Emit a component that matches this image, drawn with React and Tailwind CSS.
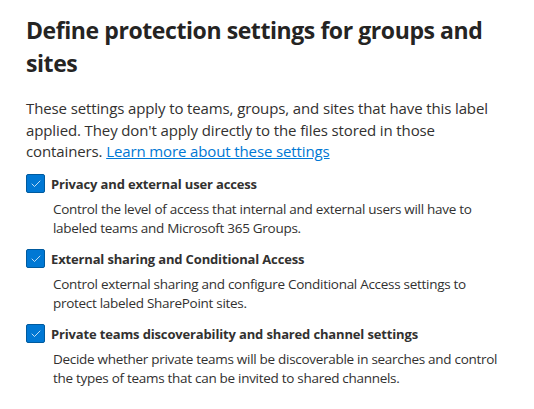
import { Check } from "lucide-react"

const items = [
	{
		title: "Privacy and external user access",
		desc: "Control the level of access that internal and external users will have to labeled teams and Microsoft 365 Groups.",
	},
	{
		title: "External sharing and Conditional Access",
		desc: "Control external sharing and configure Conditional Access settings to protect labeled SharePoint sites.",
	},
	{
		title: "Private teams discoverability and shared channel settings",
		desc: "Decide whether private teams will be discoverable in searches and control the types of teams that can be invited to shared channels.",
	},
]

const App = () => {
	return (
		<div
			className="w-[534px] h-[409px] bg-white text-[#323130] pl-[26px] pr-[30px] pt-[14px]"
			style={{ fontFamily: '"Segoe UI", "Open Sans", sans-serif' }}
		>
			<h1 className="text-[23px] leading-[33px] font-bold tracking-[-0.42px] text-[#252423]">
				Define protection settings for groups and sites
			</h1>

			<p className="mt-[18px] text-[15px] leading-[21.5px] tracking-[-0.12px]">
				These settings apply to teams, groups, and sites that have this label
				applied. They don't apply directly to the files stored in those
				containers.{" "}
				<a href="#" className="text-[#0078d4] underline">
					Learn more about these settings
				</a>
			</p>

			{/* CHECKBOX LIST */}
			<div className="mt-[11px] flex flex-col gap-[11px]">
				{items.map(item => (
					<div key={item.title}>
						<div className="flex items-center gap-[6px] h-[20px]">
							<div className="w-[19px] h-[19px] rounded-[2px] bg-[#0078d4] border border-[#005a9e] flex items-center justify-center shrink-0">
								<Check size={12} strokeWidth={1.5} className="text-white" />
							</div>
							<span className="text-[13px] font-bold leading-[20px] tracking-[-0.15px]">
								{item.title}
							</span>
						</div>
						<p className="mt-[6px] pl-[27px] text-[13.5px] leading-[19px] tracking-[-0.29px]">
							{item.desc}
						</p>
					</div>
				))}
			</div>
		</div>
	)
}

export default App
